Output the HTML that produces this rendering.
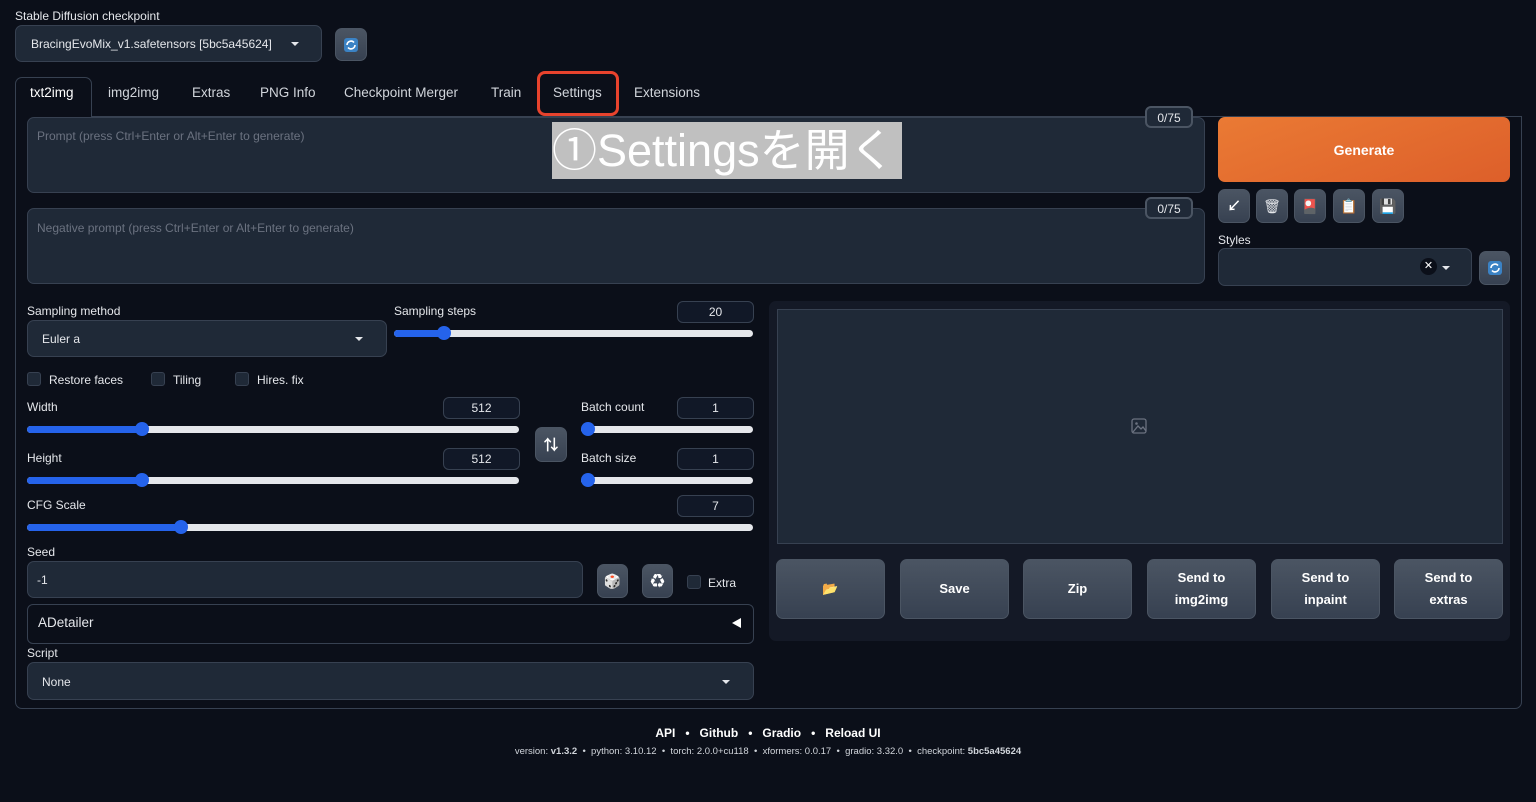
<!DOCTYPE html>
<html><head><meta charset="utf-8"><style>
*{box-sizing:border-box;margin:0;padding:0}
body{width:1536px;height:802px;background:#0b0f19;font-family:"Liberation Sans","Noto Sans CJK JP",sans-serif;color:#e5e7eb;font-size:12px;position:relative;overflow:hidden}
.a{position:absolute}
.lbl{position:absolute;font-size:12px;color:#e5e7eb;white-space:nowrap;margin-top:1px}
.inp{position:absolute;background:#1f2937;border:1px solid #374151;border-radius:7px}
.btn{position:absolute;background:linear-gradient(#4b5563,#374151);border:1px solid #4b5563;border-radius:7px;display:flex;align-items:center;justify-content:center;color:#fff;font-weight:bold;font-size:13px;text-align:center;line-height:22px}
.num{position:absolute;background:#111827;border:1px solid #374151;border-radius:6px;width:77px;height:22px;text-align:center;line-height:20px;font-size:12px}
.tr{position:absolute;height:7px;border-radius:4px;background:#e5e7eb}
.fill{position:absolute;height:7px;border-radius:4px;background:#2563eb;left:0;top:0}
.th{position:absolute;width:14px;height:14px;border-radius:50%;background:#2563eb;top:-4px}
.cb{position:absolute;width:14px;height:14px;border:1px solid #374151;background:#1f2937;border-radius:3px}
.caret{position:absolute;width:0;height:0;border-left:4px solid transparent;border-right:4px solid transparent;border-top:4px solid #e5e7eb}
.tab{position:absolute;top:85px;font-size:13.5px;color:#d1d5db}
.ico{position:absolute;background:linear-gradient(#4b5563,#374151);border:1px solid #4b5563;border-radius:7px;width:32px;height:34px;display:flex;align-items:center;justify-content:center;font-size:14px}
</style></head><body>
<div class="lbl" style="left:15px;top:8px">Stable Diffusion checkpoint</div>
<div class="inp" style="left:15px;top:25px;width:307px;height:37px"></div>
<div class="lbl" style="left:31px;top:36px">BracingEvoMix_v1.safetensors [5bc5a45624]</div>
<div class="caret" style="left:291px;top:42px"></div>
<div class="ico" style="left:335px;top:28px;width:32px;height:33px"><svg width="14" height="14" viewBox="0 0 14 14"><rect x="0" y="0" width="14" height="14" rx="3" fill="#3b82c4"/><path d="M3 7a4 4 0 0 1 7-2.5M11 7a4 4 0 0 1-7 2.5" stroke="#fff" stroke-width="1.6" fill="none"/></svg></div>

<div class="a" style="left:15px;top:116px;width:1507px;height:593px;border:1px solid #374151;border-radius:0 0 7px 7px"></div>
<div class="a" style="left:15px;top:77px;width:77px;height:41px;border:1px solid #374151;border-bottom:none;border-radius:7px 7px 0 0;background:#0b0f19"></div>
<div class="tab" style="left:30px;color:#fff">txt2img</div>
<div class="tab" style="left:108px">img2img</div>
<div class="tab" style="left:192px">Extras</div>
<div class="tab" style="left:260px">PNG Info</div>
<div class="tab" style="left:344px">Checkpoint Merger</div>
<div class="tab" style="left:491px">Train</div>
<div class="tab" style="left:553px">Settings</div>
<div class="tab" style="left:634px">Extensions</div>
<div class="a" style="left:537px;top:71px;width:82px;height:45px;border:3px solid #e8432d;border-radius:8px"></div>

<div class="inp" style="left:27px;top:117px;width:1178px;height:76px"></div>
<div class="lbl" style="left:37px;top:128px;color:#6b7280">Prompt (press Ctrl+Enter or Alt+Enter to generate)</div>
<div class="num" style="left:1145px;top:106px;width:48px;border:2px solid #4b5563;background:#1f2937">0/75</div>
<div class="inp" style="left:27px;top:208px;width:1178px;height:76px"></div>
<div class="lbl" style="left:37px;top:220px;color:#6b7280">Negative prompt (press Ctrl+Enter or Alt+Enter to generate)</div>
<div class="num" style="left:1145px;top:197px;width:48px;border:2px solid #4b5563;background:#1f2937">0/75</div>
<div class="a" style="left:552px;top:122px;width:350px;height:57px;background:#c0c0c0;color:#fff;font-size:45px;line-height:57px;white-space:nowrap;overflow:hidden">①Settingsを開く</div>

<div class="a" style="left:1218px;top:117px;width:292px;height:65px;border-radius:7px;background:linear-gradient(160deg,#ea7a34,#dd5f2a);color:#fff;font-weight:bold;font-size:14px;display:flex;align-items:center;justify-content:center">Generate</div>
<div class="ico" style="left:1218px;top:189px;color:#fff;font-weight:bold">↙</div>
<div class="ico" style="left:1256px;top:189px">🗑</div>
<div class="ico" style="left:1294px;top:189px">🎴</div>
<div class="ico" style="left:1333px;top:189px">📋</div>
<div class="ico" style="left:1372px;top:189px">💾</div>
<div class="lbl" style="left:1218px;top:232px">Styles</div>
<div class="inp" style="left:1218px;top:248px;width:254px;height:38px"></div>
<div class="a" style="left:1420px;top:258px;width:17px;height:17px;border-radius:50%;background:#0b0f19;color:#fff;font-size:11px;text-align:center;line-height:17px">✕</div>
<div class="caret" style="left:1442px;top:266px"></div>
<div class="ico" style="left:1479px;top:251px;width:31px;height:34px"><svg width="14" height="14" viewBox="0 0 14 14"><rect width="14" height="14" rx="3" fill="#3b82c4"/><path d="M3 7a4 4 0 0 1 7-2.5M11 7a4 4 0 0 1-7 2.5" stroke="#fff" stroke-width="1.6" fill="none"/></svg></div>

<div class="lbl" style="left:27px;top:303px">Sampling method</div>
<div class="inp" style="left:27px;top:320px;width:360px;height:37px"></div>
<div class="lbl" style="left:42px;top:331px">Euler a</div>
<div class="caret" style="left:355px;top:337px"></div>
<div class="lbl" style="left:394px;top:303px">Sampling steps</div>
<div class="num" style="left:677px;top:301px">20</div>
<div class="tr" style="left:394px;top:330px;width:359px"><div class="fill" style="width:50px"></div><div class="th" style="left:43px"></div></div>

<div class="cb" style="left:27px;top:372px"></div><div class="lbl" style="left:49px;top:372px">Restore faces</div>
<div class="cb" style="left:151px;top:372px"></div><div class="lbl" style="left:173px;top:372px">Tiling</div>
<div class="cb" style="left:235px;top:372px"></div><div class="lbl" style="left:257px;top:372px">Hires. fix</div>

<div class="lbl" style="left:27px;top:399px">Width</div>
<div class="num" style="left:443px;top:397px">512</div>
<div class="tr" style="left:27px;top:426px;width:492px"><div class="fill" style="width:117px"></div><div class="th" style="left:108px"></div></div>
<div class="lbl" style="left:27px;top:450px">Height</div>
<div class="num" style="left:443px;top:448px">512</div>
<div class="tr" style="left:27px;top:477px;width:492px"><div class="fill" style="width:117px"></div><div class="th" style="left:108px"></div></div>
<div class="ico" style="left:535px;top:427px;width:32px;height:35px;color:#fff;font-weight:bold;font-size:15px">⇅</div>
<div class="lbl" style="left:581px;top:399px">Batch count</div>
<div class="num" style="left:677px;top:397px">1</div>
<div class="tr" style="left:581px;top:426px;width:172px"><div class="th" style="left:0px"></div></div>
<div class="lbl" style="left:581px;top:450px">Batch size</div>
<div class="num" style="left:677px;top:448px">1</div>
<div class="tr" style="left:581px;top:477px;width:172px"><div class="th" style="left:0px"></div></div>
<div class="lbl" style="left:27px;top:497px">CFG Scale</div>
<div class="num" style="left:677px;top:495px">7</div>
<div class="tr" style="left:27px;top:524px;width:726px"><div class="fill" style="width:156px"></div><div class="th" style="left:147px"></div></div>

<div class="lbl" style="left:27px;top:544px">Seed</div>
<div class="inp" style="left:27px;top:561px;width:556px;height:37px"></div>
<div class="lbl" style="left:37px;top:572px">-1</div>
<div class="ico" style="left:597px;top:564px;width:31px;height:34px">🎲</div>
<div class="ico" style="left:642px;top:564px;width:31px;height:34px;color:#fff">♻</div>
<div class="cb" style="left:687px;top:575px"></div><div class="lbl" style="left:708px;top:575px">Extra</div>
<div class="a" style="left:27px;top:604px;width:727px;height:40px;border:1px solid #374151;border-radius:6px"></div>
<div class="lbl" style="left:38px;top:615px;font-size:13.5px;margin-top:0">ADetailer</div>
<div class="a" style="left:732px;top:618px;width:0;height:0;border-top:5px solid transparent;border-bottom:5px solid transparent;border-right:9px solid #fff"></div>
<div class="lbl" style="left:27px;top:645px">Script</div>
<div class="inp" style="left:27px;top:662px;width:727px;height:38px"></div>
<div class="lbl" style="left:42px;top:674px">None</div>
<div class="caret" style="left:722px;top:680px"></div>

<div class="a" style="left:769px;top:301px;width:741px;height:340px;background:#141926;border-radius:7px"></div>
<div class="a" style="left:777px;top:309px;width:726px;height:235px;background:#1f2937;border:1px solid #374151"></div>
<svg class="a" style="left:1131px;top:418px" width="16" height="16" viewBox="0 0 16 16"><rect x="1" y="1" width="14" height="14" rx="2" fill="none" stroke="#6b7280" stroke-width="1.3"/><circle cx="5.5" cy="5.5" r="1.3" fill="#6b7280"/><path d="M2 14l5-6 3 3 2-2 3 4" fill="none" stroke="#6b7280" stroke-width="1.3"/></svg>
<div class="btn" style="left:776px;top:559px;width:109px;height:60px">📂</div>
<div class="btn" style="left:900px;top:559px;width:109px;height:60px">Save</div>
<div class="btn" style="left:1023px;top:559px;width:109px;height:60px">Zip</div>
<div class="btn" style="left:1147px;top:559px;width:109px;height:60px">Send to<br>img2img</div>
<div class="btn" style="left:1271px;top:559px;width:109px;height:60px">Send to<br>inpaint</div>
<div class="btn" style="left:1394px;top:559px;width:109px;height:60px">Send to<br>extras</div>

<div class="a" style="left:0;top:726px;width:1536px;text-align:center;font-weight:bold;font-size:12px;color:#fff">API&nbsp;&nbsp;&nbsp;•&nbsp;&nbsp;&nbsp;Github&nbsp;&nbsp;&nbsp;•&nbsp;&nbsp;&nbsp;Gradio&nbsp;&nbsp;&nbsp;•&nbsp;&nbsp;&nbsp;Reload UI</div>
<div class="a" style="left:0;top:746px;width:1536px;text-align:center;font-size:9.5px;color:#d1d5db">version: <b>v1.3.2</b>&nbsp;&nbsp;•&nbsp;&nbsp;python: 3.10.12&nbsp;&nbsp;•&nbsp;&nbsp;torch: 2.0.0+cu118&nbsp;&nbsp;•&nbsp;&nbsp;xformers: 0.0.17&nbsp;&nbsp;•&nbsp;&nbsp;gradio: 3.32.0&nbsp;&nbsp;•&nbsp;&nbsp;checkpoint: <b>5bc5a45624</b></div>
</body></html>
